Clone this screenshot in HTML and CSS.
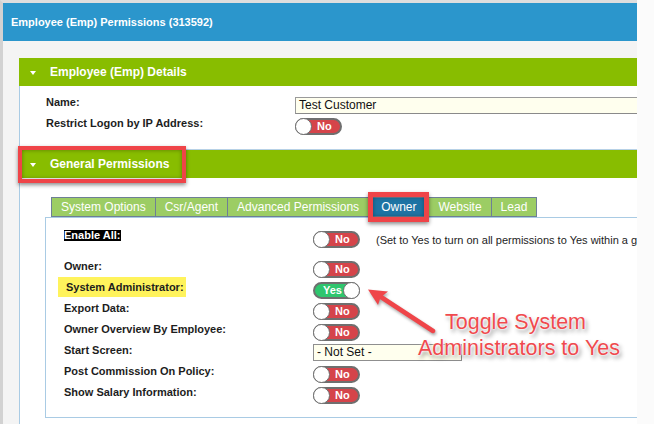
FILE: index.html
```html
<!DOCTYPE html>
<html>
<head>
<meta charset="utf-8">
<title>Employee (Emp) Permissions</title>
<link rel="stylesheet" href="styles.css">
</head>
<body>
<div class="window">
  <div class="win-title">Employee (Emp) Permissions (313592)</div>
  <div class="win-body">
    <section class="panel">
      <div class="bar"><span class="caret"></span>Employee (Emp) Details</div>
      <div class="panel-body details">
        <div class="row">
          <div class="lbl">Name:</div>
          <div class="ctl"><div class="input">Test Customer</div></div>
        </div>
        <div class="row">
          <div class="lbl">Restrict Logon by IP Address:</div>
          <div class="ctl"><span class="toggle no"><span class="knob"></span>No</span></div>
        </div>
      </div>
    </section>
    <section class="panel">
      <div class="bar"><span class="caret"></span>General Permissions<span class="callout gp-callout"></span></div>
      <div class="panel-body general">
        <div class="tabs">
          <div class="tab">System Options</div>
          <div class="tab">Csr/Agent</div>
          <div class="tab">Advanced Permissions</div>
          <div class="tab active">Owner<span class="callout tab-callout"></span></div>
          <div class="tab">Website</div>
          <div class="tab">Lead</div>
        </div>
        <div class="tab-panel">
          <div class="row enable">
            <div class="lbl"><span class="hl-black">Enable All:</span></div>
            <div class="ctl"><span class="toggle no"><span class="knob"></span>No</span><span class="hint">(Set to Yes to turn on all permissions to Yes within a group)</span></div>
          </div>
          <div class="row">
            <div class="lbl">Owner:</div>
            <div class="ctl"><span class="toggle no"><span class="knob"></span>No</span></div>
          </div>
          <div class="row">
            <div class="lbl"><span class="hl-yellow">System Administrator:</span></div>
            <div class="ctl"><span class="toggle yes">Yes<span class="knob"></span></span></div>
          </div>
          <div class="row">
            <div class="lbl">Export Data:</div>
            <div class="ctl"><span class="toggle no"><span class="knob"></span>No</span></div>
          </div>
          <div class="row">
            <div class="lbl">Owner Overview By Employee:</div>
            <div class="ctl"><span class="toggle no"><span class="knob"></span>No</span></div>
          </div>
          <div class="row">
            <div class="lbl">Start Screen:</div>
            <div class="ctl sel"><div class="select">- Not Set -</div></div>
          </div>
          <div class="row">
            <div class="lbl">Post Commission On Policy:</div>
            <div class="ctl"><span class="toggle no"><span class="knob"></span>No</span></div>
          </div>
          <div class="row">
            <div class="lbl">Show Salary Information:</div>
            <div class="ctl"><span class="toggle no"><span class="knob"></span>No</span></div>
          </div>
        </div>
      </div>
    </section>
  </div>
  <svg class="arrow" width="634" height="421" viewBox="3 3 634 421" xmlns="http://www.w3.org/2000/svg">
    <line x1="433" y1="331" x2="381" y2="297" stroke="#ef4549" stroke-width="4.5" stroke-linecap="round"/>
    <polygon points="368,289.5 388,291.5 380.5,297.5 378,305" fill="#ef4549"/>
  </svg>
  <div class="note"><span class="l1">Toggle System</span><span class="l2">Administrators to Yes</span></div>
</div>
</body>
</html>
```
FILE: styles.css
```css
html, body {
  margin: 0;
  padding: 0;
}
body {
  background: #fbfbfb;
  font-family: "Liberation Sans", Arial, sans-serif;
  color: #1d1d1d;
}
.window {
  position: relative;
  width: 637px;
  height: 424px;
  box-sizing: border-box;
  border-top: 3px solid #dedede;
  border-left: 3px solid #d2d2d2;
  background: #f4f4f4;
  overflow: hidden;
}
.win-title {
  height: 38px;
  line-height: 38px;
  background: #2b96cc;
  color: #fff;
  font-weight: bold;
  font-size: 11px;
  padding-left: 8px;
}
.win-body {
  padding: 17px 0 0 16px;
}
.bar {
  position: relative;
  height: 28px;
  line-height: 28px;
  background: #88bd00;
  color: #fff;
  font-weight: bold;
  font-size: 12px;
  padding-left: 11px;
  white-space: nowrap;
}
.caret {
  display: inline-block;
  width: 0;
  height: 0;
  border-left: 3.5px solid transparent;
  border-right: 3.5px solid transparent;
  border-top: 4px solid #fff;
  vertical-align: middle;
  margin-right: 14px;
}
.panel-body {
  background: #fff;
  border-left: 1px solid #a9cbe4;
}
.details {
  padding: 10px 0 11px 26px;
  border-bottom: 1px solid #b7d1e6;
}
.row {
  display: grid;
  grid-template-columns: 249px auto;
  height: 21px;
  align-items: start;
}
.row.enable {
  height: 31px;
}
.lbl {
  font-weight: bold;
  font-size: 11px;
  line-height: 13px;
  white-space: nowrap;
  color: #1d1d1d;
}
.ctl {
  display: flex;
  align-items: center;
  padding-top: 1px;
  white-space: nowrap;
}
.ctl.sel {
  padding-top: 0;
}
.input {
  box-sizing: border-box;
  width: 380px;
  height: 17px;
  border: 1px solid #9a9a9a;
  border-bottom-color: #8a8a8a;
  background: #ffffee;
  font-size: 12px;
  line-height: 15px;
  padding-left: 3px;
  color: #111;
}
.select {
  box-sizing: border-box;
  width: 149px;
  height: 17px;
  border: 1px solid #8f8f8f;
  background: #ffffee;
  font-size: 12px;
  line-height: 15px;
  padding-left: 3px;
  color: #111;
}
.toggle {
  position: relative;
  display: inline-block;
  box-sizing: border-box;
  width: 47px;
  height: 17px;
  border: 2px solid #6f6f6f;
  border-radius: 9px;
  color: #fff;
  font-weight: bold;
  font-size: 11px;
  line-height: 13px;
  flex: none;
}
.toggle.no {
  background: #d5444a;
  padding-left: 20px;
}
.toggle.yes {
  background: #2ec66e;
  padding-left: 8px;
}
.knob {
  position: absolute;
  top: -2px;
  width: 17px;
  height: 17px;
  box-sizing: border-box;
  border-radius: 50%;
  background: #fff;
  border: 1.5px solid #6f6f6f;
}
.no .knob {
  left: -2px;
}
.yes .knob {
  right: -2px;
}
.hint {
  margin-left: 16px;
  font-size: 11px;
  line-height: 17px;
  color: #1d1d1d;
  padding-top: 2px;
}
.general {
  padding: 19px 0 0 25px;
  height: 260px;
}
.tabs {
  display: flex;
  margin-left: 6px;
  height: 20px;
}
.tab {
  position: relative;
  box-sizing: border-box;
  height: 20px;
  border: 1px solid #6e7f96;
  background: #9ccd64;
  color: #fff;
  font-size: 12px;
  line-height: 18px;
  padding: 0 9px;
  margin-right: -1px;
  white-space: nowrap;
}
.tab.active {
  background: #1e74a4;
  padding: 0 12px;
  z-index: 1;
}
.tab-panel {
  border-top: 1px solid #a9cbe4;
  border-left: 1px solid #a9cbe4;
  border-bottom: 1px solid #a9cbe4;
  padding: 11px 0 10px 18px;
}
.hl-black {
  display: inline-block;
  background: #000;
  color: #fff;
  line-height: 11px;
  margin-top: 1px;
  padding-right: 1px;
}
.hl-yellow {
  display: inline-block;
  background: #fff35c;
  margin: -4px 0 0 -6px;
  padding: 4px 2px 3px 8px;
}
.callout {
  position: absolute;
  box-sizing: border-box;
  border: 4px solid #ef4448;
  box-shadow: 0 2px 4px rgba(0, 0, 0, 0.45), inset 0 0 4px rgba(0, 0, 0, 0.35);
}
.gp-callout {
  left: -1px;
  top: -4px;
  width: 168px;
  height: 37px;
}
.tab-callout {
  left: -1px;
  right: -1px;
  top: -6px;
  bottom: -6px;
  border-width: 5px;
}
.arrow {
  position: absolute;
  left: 0;
  top: 0;
  filter: drop-shadow(1px 2px 1.5px rgba(0, 0, 0, 0.35));
}
.note {
  position: absolute;
  left: 415px;
  top: 306px;
  font-family: "Liberation Sans", Arial, sans-serif;
  font-size: 21.5px;
  line-height: 26px;
  color: #ef4a4e;
  white-space: nowrap;
  text-shadow: 0 0 1px #fff, 0 0 2px #fff, 0 0 3px #fff, 2px 3px 4px rgba(0, 0, 0, 0.45);
}
.note .l1 {
  display: block;
  padding-left: 27px;
}
.note .l2 {
  display: block;
}
```
